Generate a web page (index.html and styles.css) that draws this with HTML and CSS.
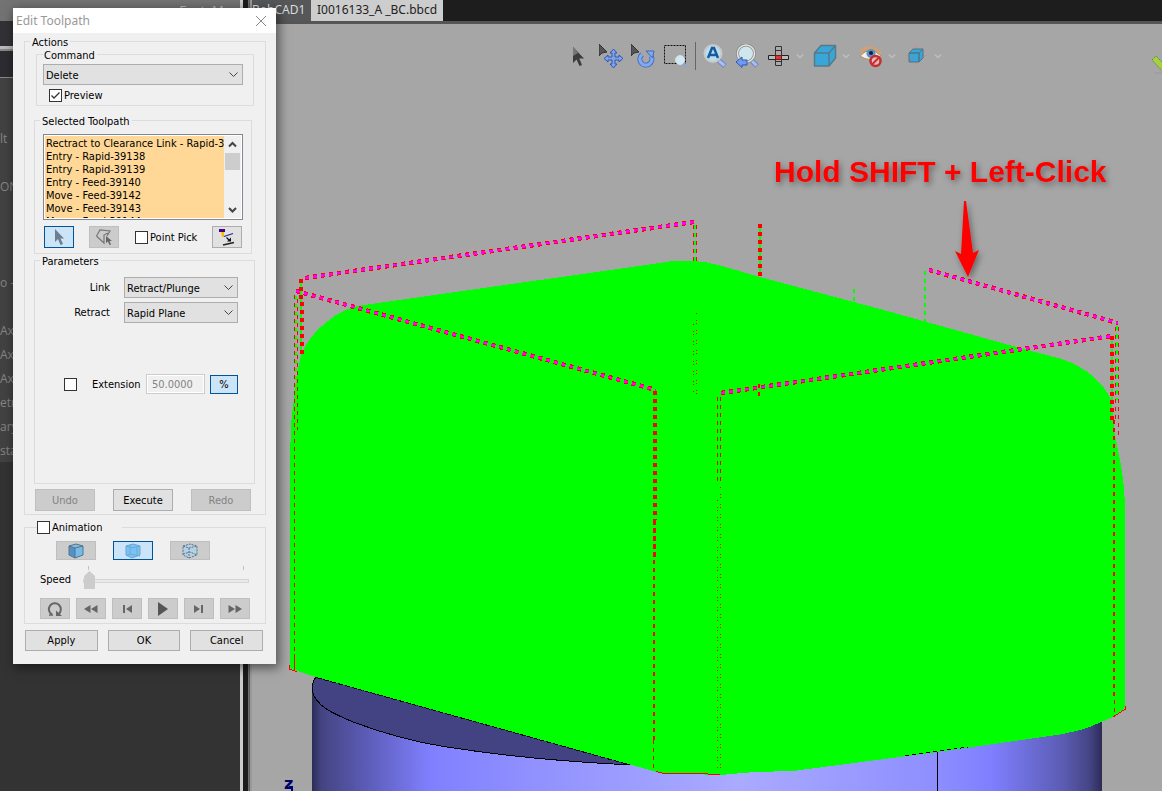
FILE: index.html
```html
<!DOCTYPE html>
<html lang="en">
<head>
<meta charset="utf-8">
<title>BobCAD - Edit Toolpath</title>
<link rel="stylesheet" href="styles.css">
</head>
<body>
<div class="app">
  <aside class="side">
    <div class="side-tab">Feat. Mgr</div>
    <div class="side-strip"></div>
    <div class="side-edit"></div>
    <div class="side-tree">
      <span class="row r-lt">lt</span>
      <span class="row r-on">ON</span>
      <span class="row r-o">o -</span>
      <span class="row">Ax</span>
      <span class="row">Ax</span>
      <span class="row">Ax</span>
      <span class="row">etr</span>
      <span class="row">ary</span>
      <span class="row">sta</span>
    </div>
    <div class="side-empty"></div>
  </aside>
  <div class="splitter"></div>
  <main class="work">
    <nav class="tabs">
      <a class="tab" href="#">BobCAD1</a>
      <a class="tab tab-on" href="#">I0016133_A _BC.bbcd</a>
    </nav>
    <div class="view">
      <svg class="scene" viewBox="252 24 910 767" preserveAspectRatio="xMidYMid slice" shape-rendering="crispEdges">
        <defs>
          <linearGradient id="cyl" gradientUnits="userSpaceOnUse" x1="312" y1="0" x2="1102" y2="0">
            <stop offset="0" stop-color="#2c2c58"/><stop offset=".012" stop-color="#444483"/>
            <stop offset=".07" stop-color="#5c5cb8"/><stop offset=".15" stop-color="#8080ff"/>
            <stop offset=".3" stop-color="#9393ff"/><stop offset=".54" stop-color="#aaaaff"/>
            <stop offset=".79" stop-color="#8e8eff"/><stop offset=".86" stop-color="#7f7fff"/>
            <stop offset=".95" stop-color="#5c5cb4"/><stop offset=".985" stop-color="#444484"/>
            <stop offset="1" stop-color="#2c2c58"/>
          </linearGradient>
          <filter id="sh" x="-20%" y="-20%" width="150%" height="150%">
            <feDropShadow dx="2" dy="3" stdDeviation="3" flood-color="#000" flood-opacity=".4"/>
          </filter>
        </defs>
        <path fill="url(#cyl)" d="M312 690V800H1102V715L700 740L400 700Z"/>
        <path fill="#434383" stroke="#000" d="M316 677Q312 682 312 690C315 706 334 714 353 722C388 735 420 743 447 747C510 757 570 762 632 765Z"/>
        <path stroke="#000" d="M937.500 750V800"/>
        <path fill="#0f0" d="M290 668V460L291 425L293 407L297 375L301 355Q306 343 314 334Q335 311 358 306L413 298L660 263Q678 259 705 262L722 266L760 277L880 309L1020 348L1062 359Q1100 373 1112 402L1114 430L1120 460Q1125 485 1125 515V708L1113 717L1092 726L1080 730L1063 734L938 752L793 771L755 772L720 775L660 773L632 765L316 677L297 671Z"/>
        <path fill="none" stroke="#000" stroke-dasharray="4 3" d="M318 678L630 765M905 756L968 747"/>
        <g fill="none" stroke="#0f0" stroke-width="2">
          <path stroke-dasharray="4 4" d="M695 225V262M854 289V303M925 271V322M296 296V450M1117 326V400"/>
          <path d="M301 280V352M760 224V276"/>
          <path stroke-dasharray="4 4" d="M1112 341V400"/>
        </g>
        <g fill="none" stroke="red">
          <path stroke-dasharray="4 4" d="M693.500 225V262M696.500 225V262M294.500 295V660M297.500 299V430M717.500 397V481M720.500 397V481M1115.500 327V420M1118.500 327V435"/>
          <path stroke-dasharray="1 6 1 2" d="M696.500 313V394M693.500 324V394M720.500 487V770M717.500 500V770"/>
          <path stroke-width="4" stroke-dasharray="4 4" d="M301 279V299M302 302V354M760 224V276M655 391V520M1112 336V420"/>
          <path stroke-width="3" stroke-dasharray="5 3" d="M654.500 520V560"/>
          <path stroke-width="2" stroke-dasharray="4 4" d="M654 560V740M1114 420V700M759 384V396"/>
          <path stroke-dasharray="4 4" d="M653.500 740V768M1114.500 700V712"/>
          <path d="M294.500 654V671M289 665V669L297 671.500M656 771.500L664 773.500H696L720 774.500M1125.500 706V709L1113 717"/>
        </g>
        <g fill="none">
          <g stroke="red" stroke-width="4.500" stroke-dasharray="4.100 4">
            <path d="M305 278L694 222"/><path d="M296 291L656 390"/><path d="M929 270L1118 323"/><path d="M721 393L1112 336"/>
          </g>
          <g stroke="#f0f" stroke-width="2.400" stroke-dasharray="4.100 4">
            <path d="M305 278L694 222"/><path d="M296 291L656 390"/><path d="M929 270L1118 323"/><path d="M721 393L1112 336"/>
          </g>
        </g>
        <g filter="url(#sh)" shape-rendering="auto">
          <text class="note" x="774" y="182">Hold SHIFT + Left-Click</text>
          <path fill="red" d="M964 201H966L973 253L979 250L968 277L955 251L961 254Z"/>
        </g>
        <text class="axis" x="284" y="789">z</text>
        <path fill="none" stroke="#007" stroke-width="2" d="M289 787H292V792"/>
        <g shape-rendering="auto" stroke-width="1">
          <path fill="#a6cf45" stroke="#5a8a2a" stroke-dasharray="1.500 1" d="M1152 60L1156 56L1168 68V77Z"/>
          <path stroke="#999" d="M1155 73H1162"/>
        </g>
      </svg>
      <div class="toolbar">
        <button class="tool" aria-label="Select"><svg viewBox="0 0 24 24"><path d="M6 3V19L9.500 15.500L12.500 22L15 21L12.300 14.500H17Z" fill="#3c3c3c"/><path d="M6 3V12L11 9Z" fill="#777"/></svg></button>
        <button class="tool" aria-label="Pan"><svg viewBox="0 0 24 24"><path d="M0 0V12L3 9L8 8Z" fill="#555" stroke="#333"/><path d="M14.500 5L18 9H16V13H20V11L24 14.500L20 18V16H16V20H18L14.500 24L11 20H13V16H9V18L5 14.500L9 11V13H13V9H11Z" fill="#7aa2ee" stroke="#3558ae" stroke-width="1"/></svg></button>
        <button class="tool" aria-label="Rotate"><svg viewBox="0 0 24 24"><path d="M0 0V12L3 9L8 8Z" fill="#555" stroke="#333"/><path d="M11 10.500A6 6 0 1 0 20 12" fill="none" stroke="#4268b8" stroke-width="5"/><path d="M11 10.500A6 6 0 1 0 20 12" fill="none" stroke="#81a9f0" stroke-width="3.400"/><path d="M15 7H23L21.500 14Z" fill="#81a9f0" stroke="#4268b8"/></svg></button>
        <button class="tool" aria-label="Zoom window"><svg viewBox="0 0 24 24"><path d="M1.500 1.500H22.500V19.500H1.500Z" fill="none" stroke="#111" stroke-dasharray="2 1"/><path d="M19 18L23 22" stroke="#86a6dc" stroke-width="3"/><circle cx="17" cy="16" r="4.500" fill="#cfeaf5" stroke="#ddd"/></svg></button>
        <span class="sep"></span>
        <button class="tool" aria-label="Zoom all"><svg viewBox="0 0 24 24"><path d="M15 16L22 22" stroke="#7086bd" stroke-width="5"/><path d="M16 17L21.500 21.500" stroke="#a8bdf0" stroke-width="3"/><circle cx="10" cy="9.500" r="8.500" fill="#b9def0" stroke="#c8c8c8" stroke-width="2"/><path d="M5 14L9 4H11L15 14M7 11H13" fill="none" stroke="#175a9e" stroke-width="2.500"/></svg></button>
        <button class="tool" aria-label="Zoom previous"><svg viewBox="0 0 24 24"><path d="M16 16L22 22" stroke="#7086bd" stroke-width="5"/><path d="M17 17L21.500 21.500" stroke="#a8bdf0" stroke-width="3"/><circle cx="11" cy="9.500" r="8.500" fill="#cfe6ee" stroke="#888" stroke-width="3"/><circle cx="11" cy="9.500" r="8.500" fill="none" stroke="#e6e6e6" stroke-width="1.500"/><path d="M1 18L7 13V16H12V21H7V23.500Z" fill="#6f9cf0" stroke="#2f55b0"/></svg></button>
        <span class="split"><button class="tool" aria-label="Work plane"><svg viewBox="0 0 24 24"><path d="M8.500 2.500H14.500V21.500H8.500ZM8.500 6.500H14.500M8.500 17.500H14.500" fill="#aaa" stroke="#333"/><path d="M1.500 11.500H21.500V15.500H1.500Z" fill="#bbb" stroke="#222"/><path d="M8.500 11.500H14.500V15.500H8.500Z" fill="#e83030" stroke="#622"/></svg></button><button class="drop" aria-label="Work plane options"><svg viewBox="0 0 11 11"><path d="M2 4L5.500 7L9 4" /></svg></button></span>
        <span class="split"><button class="tool" aria-label="Views"><svg viewBox="0 0 24 24"><path d="M1.500 9L8 1.500H22.500L16 9ZM16 9L22.500 1.500V14L16 22Z M1.500 9H16V22H1.500Z" fill="#39a6d9" stroke="#557b88" stroke-width="1.500" stroke-linejoin="round"/></svg></button><button class="drop" aria-label="View options"><svg viewBox="0 0 11 11"><path d="M2 4L5.500 7L9 4"/></svg></button></span>
        <span class="split"><button class="tool" aria-label="Visibility"><svg viewBox="0 0 24 24"><path d="M1 12Q11 1 22 12Q11 19 1 12Z" fill="#f4efe8" stroke="#b98a5e"/><path d="M1 8Q11-1 22 9" fill="none" stroke="#d9a066" stroke-width="2.500"/><circle cx="12" cy="9.500" r="4.500" fill="#5b8fc7"/><circle cx="12" cy="9" r="2" fill="#123"/><circle cx="16.500" cy="17" r="5" fill="#e8b8b8" stroke="#c43030" stroke-width="2.500"/><path d="M13 20.500L20 13.500" stroke="#c43030" stroke-width="2"/></svg></button><button class="drop" aria-label="Visibility options"><svg viewBox="0 0 11 11"><path d="M2 4L5.500 7L9 4"/></svg></button></span>
        <span class="split"><button class="tool" aria-label="Section"><svg viewBox="0 0 24 24"><path d="M11.500 1V22M0 11.500H22" stroke="#d88"/><path d="M4 9L8 5H18L14 9ZM14 9L18 5V14L14 18ZM4 9H14V18H4Z" fill="#39a6d9" stroke="#4d7584" stroke-linejoin="round"/><path d="M5 17L9 13" stroke="#a77"/></svg></button><button class="drop" aria-label="Section options"><svg viewBox="0 0 11 11"><path d="M2 4L5.500 7L9 4"/></svg></button></span>
      </div>
    </div>
  </main>
</div>

<form class="dialog" aria-label="Edit Toolpath">
  <header class="title">
    <span>Edit Toolpath</span>
    <button type="button" class="close" aria-label="Close"><svg viewBox="0 0 12 12"><path d="M1 1L11 11M11 1L1 11"/></svg></button>
  </header>
  <div class="body">
    <fieldset class="group actions">
      <legend>Actions</legend>
      <fieldset class="group command">
        <legend>Command</legend>
        <select class="combo" aria-label="Command"><option>Delete</option></select>
        <label class="check"><input type="checkbox" checked>Preview</label>
      </fieldset>
      <fieldset class="group selected">
        <legend>Selected Toolpath</legend>
        <div class="list">
          <select multiple size="6" aria-label="Selected Toolpath">
            <option selected>Rectract to Clearance Link - Rapid-39137</option>
            <option selected>Entry - Rapid-39138</option>
            <option selected>Entry - Rapid-39139</option>
            <option selected>Entry - Feed-39140</option>
            <option selected>Move - Feed-39142</option>
            <option selected>Move - Feed-39143</option>
            <option selected>Move - Feed-39144</option>
          </select>
          <div class="scroll">
            <button type="button" aria-label="Scroll up"><svg viewBox="0 0 11 11"><path d="M2 7.500L5.500 4L9 7.500"/></svg></button>
            <span class="thumb"></span>
            <button type="button" aria-label="Scroll down"><svg viewBox="0 0 11 11"><path d="M2 4L5.500 7.500L9 4"/></svg></button>
          </div>
        </div>
        <div class="pick">
          <button type="button" class="btn on" aria-label="Pick"><svg width="14" height="18" viewBox="0 0 14 18"><path d="M3 1V14L6 11L8.500 17L11 16L8.500 10.500H12Z" fill="#6d7f8e"/></svg></button>
          <button type="button" class="btn off" disabled aria-label="Polygon pick"><svg width="18" height="18" viewBox="0 0 18 18"><path d="M1.500 8L5 2L15 3L12 8M1.500 8L9 15V7L13 5" fill="none" stroke="#777" stroke-width="1.200"/><path d="M11 8V15L13 13.500L14.500 17L16 16.500L14.500 13H17Z" fill="#666"/></svg></button>
          <label class="check"><input type="checkbox">Point Pick</label>
          <button type="button" class="btn" aria-label="Edit links"><svg width="18" height="18" viewBox="0 0 18 18"><path d="M1 1H7V4H1Z" fill="#408"/><path d="M3 4H6V9H4Z" fill="#fb0"/><path d="M6 8.500L15 5.500" stroke="#22a" stroke-width="1.300"/><path d="M5 17L16 14.500" stroke="#222" stroke-width="1.300"/><path d="M8.500 9.500L11 12" stroke="#111" stroke-width="1.200"/><path d="M13 9.500V13.500H9Z" fill="#111"/></svg></button>
        </div>
      </fieldset>
      <fieldset class="group params">
        <legend>Parameters</legend>
        <div class="pair"><label for="link">Link</label><select id="link" class="combo"><option>Retract/Plunge</option></select></div>
        <div class="pair"><label for="retract">Retract</label><select id="retract" class="combo"><option>Rapid Plane</option></select></div>
        <div class="ext"><input type="checkbox" id="useext"><label for="useext">Extension</label><input type="text" class="num" value="50.0000" disabled aria-label="Extension value"><button type="button" class="btn on">%</button></div>
      </fieldset>
      <div class="cmds">
        <button type="button" class="btn off" disabled>Undo</button>
        <button type="button" class="btn">Execute</button>
        <button type="button" class="btn off" disabled>Redo</button>
      </div>
    </fieldset>
    <fieldset class="group anim">
      <legend><label class="check"><input type="checkbox">Animation</label></legend>
      <div class="modes">
        <button type="button" class="btn off" disabled aria-label="Shaded"><svg width="16" height="16" viewBox="0 0 16 16"><path d="M1 3L7 5V15L1 12Z" fill="#5590c8"/><path d="M7 5L15 3V12L7 15Z" fill="#75bbe8"/><path d="M1 3L8 1L15 3L7 5Z" fill="#8bbada"/><path d="M1 3L8 1L15 3V12L7 15L1 12ZM1 3L7 5L15 3M7 5V15" fill="none" stroke="#557488"/></svg></button>
        <button type="button" class="btn on" aria-label="Translucent"><svg width="16" height="16" viewBox="0 0 16 16"><path d="M1 3L8 1L15 3V12L7 15L1 12Z" fill="#7cc1f2" stroke="#6ba7d2"/><path d="M1 3L7 5L15 3M5 2V11L1 13M5 11L15 13M12 3V13" fill="none" stroke="#65acde"/></svg></button>
        <button type="button" class="btn off" disabled aria-label="Wireframe"><svg width="16" height="16" viewBox="0 0 16 16"><path d="M1 3L8 1L15 3V12L7 15L1 12Z" fill="#b4d0e4"/><path d="M1 3L8 1L15 3V12L7 15L1 12ZM1 3L7 5L15 3M7 5V15M1 11L8 9L15 12" fill="none" stroke="#5b7282" stroke-dasharray="2 1"/></svg></button>
      </div>
      <div class="speed">
        <label for="speed">Speed</label>
        <div class="slide">
          <div class="ticks"><i></i><i></i></div>
          <input id="speed" type="range" min="0" max="100" value="0" disabled>
        </div>
      </div>
      <div class="play">
        <button type="button" class="btn off" disabled aria-label="Loop"><svg width="18" height="18" viewBox="0 0 18 18"><path d="M6 14.500A6 6 0 1 1 12.500 14" fill="none" stroke="#666" stroke-width="2"/><path d="M10 10.500V16H16Z" fill="#666"/><path d="M3 15H7" stroke="#666" stroke-width="1.500"/></svg></button>
        <button type="button" class="btn off" disabled aria-label="Rewind"><svg width="16" height="10" viewBox="0 0 16 10"><path d="M7.500 1V9L1 5ZM14.500 1V9L8 5Z" fill="#666"/></svg></button>
        <button type="button" class="btn off" disabled aria-label="Previous"><svg width="16" height="10" viewBox="0 0 16 10"><path d="M4 1H6V9H4ZM13 1V9L7 5Z" fill="#666"/></svg></button>
        <button type="button" class="btn off" disabled aria-label="Play"><svg width="12" height="16" viewBox="0 0 12 16"><path d="M1 1L11 8L1 15Z" fill="#555"/></svg></button>
        <button type="button" class="btn off" disabled aria-label="Next"><svg width="16" height="10" viewBox="0 0 16 10"><path d="M10 1H12V9H10ZM3 1V9L9 5Z" fill="#666"/></svg></button>
        <button type="button" class="btn off" disabled aria-label="Fast forward"><svg width="16" height="10" viewBox="0 0 16 10"><path d="M1.500 1V9L8 5ZM8.500 1V9L15 5Z" fill="#666"/></svg></button>
      </div>
    </fieldset>
    <footer class="foot">
      <button type="button" class="btn">Apply</button>
      <button type="button" class="btn">OK</button>
      <button type="button" class="btn">Cancel</button>
    </footer>
  </div>
</form>
</body>
</html>
```
FILE: styles.css
```css
* { box-sizing: border-box; }
html, body { height: 100%; }
body { margin: 0; overflow: hidden; background: #a6a6a6; font: 11px "DejaVu Sans Condensed", "Noto Sans", sans-serif; color: #000; }
button, select, input, legend { font: inherit; color: inherit; margin: 0; padding: 0; }
button { border: 0; background: none; }
svg { display: block; }

.app { display: grid; grid-template-columns: 243px 9px 1fr; height: 100%; }

/* side panel */
.side { display: flex; flex-direction: column; border-right: 3px solid #ccc; background: #333; overflow: hidden; color: #858585; font: 13px "Open Sans", sans-serif; }
.side-tab { height: 21px; background: #737373; color: #bbb; padding: 1px 4px 0; text-align: right; }
.side-strip { height: 28px; background: #323236; border-bottom: 3px solid #bbb; }
.side-edit { height: 29px; background: #2c2c31; border-top: 2px solid #888; border-bottom: 1px solid #888; }
.side-tree { height: 384px; background: #424242; display: flex; flex-direction: column; align-items: flex-start; padding-top: 49px; }
.row { height: 24px; line-height: 24px; white-space: nowrap; font-size: 12px; }
.r-lt { margin-bottom: 24px; }
.r-on { margin-bottom: 72px; }
.r-o { margin-bottom: 24px; }
.side-empty { flex: 1; }

.splitter { background: linear-gradient(90deg, #1c1c1c 5px, #777 5px, #555 7px, #999 7px); }

/* work area */
.work { display: flex; flex-direction: column; min-width: 0; }
.tabs { display: flex; height: 21px; background: #1d1d1d; font: 12px "Noto Sans", sans-serif; }
.tab { width: 59px; background: #555759; color: #ddd; text-decoration: none; line-height: 20px; text-align: right; padding-right: 6px; }
.tab-on { width: auto; background: #cdcdcd; color: #222; padding: 0 6px; }
.view { flex: 1; position: relative; min-height: 0; border-top: 3px solid #555; }
.scene { width: 100%; height: 100%; }
.note { font: bold 30px "Liberation Sans", sans-serif; fill: red; }
.axis { font: bold 16px "DejaVu Sans", sans-serif; fill: #006; }
.toolbar { position: absolute; top: 18px; left: 315px; display: flex; align-items: center; gap: 8px; }
.tool { width: 24px; height: 24px; }
.split { display: flex; align-items: center; gap: 4px; }
.drop { width: 10px; height: 11px; }
.drop path { fill: none; stroke: #bcbcbc; stroke-width: 2; }
.sep { width: 1px; height: 28px; margin-right: -1px; background: #666; }

/* dialog window */
.dialog { position: absolute; left: 13px; top: 8px; width: 263px; background: #f0f0f0; box-shadow: 2px 3px 10px 1px rgba(0, 0, 0, .5); }
.title { display: flex; justify-content: space-between; align-items: center; height: 25px; padding: 0 9px 0 3px; background: #fff; color: #999; font: 12px "Noto Sans", sans-serif; }
.close svg { width: 12px; height: 12px; stroke: #888; fill: none; }
.body { padding: 2px 10px 13px 11px; }
.group { border: 1px solid #dcdcdc; padding: 0; margin: 0; min-width: 0; }
legend { height: 13px; line-height: 15px; padding: 0 2px; margin-left: 5px; }
.command { margin: 0 11px 0; padding: 3px 10px 3px 6px; }
.command legend { margin-left: 0; padding-left: 1px; }
.selected { margin: 8px 13px 0 9px; padding: 7px 8px 5px; }
.selected legend, .params legend { margin-left: -3px; }
.params { margin: 0 10px 0 9px; padding: 10px 16px 0; min-height: 230px; }
.params legend { margin-left: -11px; }

.combo { appearance: none; display: block; width: 100%; height: 21px; padding: 1px 2px 0; border: 1px solid #adadad; border-radius: 0; color: #000;
  background: #e1e1e1 url("data:image/svg+xml,%3Csvg xmlns='http://www.w3.org/2000/svg' width='9' height='6'%3E%3Cpath d='M.5 .5L4.500 4.500L8.500 .5' fill='none' stroke='%23444'/%3E%3C/svg%3E") no-repeat right 4px center; }
.check { display: flex; align-items: center; gap: 2px; height: 13px; line-height: 15px; }
.command .check { margin: 4px 6px 0; }
input[type="checkbox"] { appearance: none; width: 13px; height: 13px; border: 1px solid #333; background: #fff; flex: none; }
input[type="checkbox"]:checked { background: #fff url("data:image/svg+xml,%3Csvg xmlns='http://www.w3.org/2000/svg' width='11' height='11'%3E%3Cpath d='M1.500 5.500L4 8L9.500 2.500' fill='none' stroke='%23333' stroke-width='1.300'/%3E%3C/svg%3E") center; }

.list { display: flex; height: 86px; border: 1px solid #828790; background: #fff; padding: 1px; }
.list select { appearance: none; flex: 1; min-width: 0; height: 82px; padding-top: 1px; border: 0; border-radius: 0; outline: 0; overflow: hidden; background: #ffd897; scrollbar-width: none; }
.list option { height: 13px; min-height: 0; line-height: 13px; padding: 0 1px; color: #000; white-space: nowrap; }
.list option:checked { background: #ffd897 linear-gradient(#ffd897, #ffd897); color: #000; }
.scroll { width: 17px; display: flex; flex-direction: column; align-items: center; background: #f0f0f0; }
.scroll button { width: 17px; height: 17px; display: grid; place-items: center; }
.scroll svg { width: 11px; height: 11px; fill: none; stroke: #444; stroke-width: 2; }
.thumb { width: 15px; height: 17px; background: #cdcdcd; margin-bottom: auto; }

.btn { display: flex; align-items: center; justify-content: center; height: 21px; border: 1px solid #adadad; background: #e1e1e1; }
.btn.on { border-color: #005499; background: #cce4f7; }
.btn.off { border-color: #bfbfbf; background: #ccc; color: #838383; }
.pick { display: flex; align-items: center; margin: 6px 1px 0; }
.pick .btn { width: 30px; height: 22px; }
.pick .off { margin-left: 15px; }
.pick .check { margin: 0 auto 0 16px; }

.pair { display: grid; grid-template-columns: 60px 114px; justify-content: end; align-items: center; margin-bottom: 4px; }
.pair label { padding-right: 14px; text-align: right; margin-left: -10px; }
.ext { display: flex; align-items: center; height: 20px; margin: 51px 0 0 13px; }
.ext label { margin-left: 15px; width: 54px; white-space: nowrap; }
.num { width: 59px; height: 20px; border: 1px solid #ccc; background: #f0f0f0; box-shadow: inset 0 0 0 1px #fff; padding: 0 5px; color: #838383; }
.ext .btn { width: 28px; height: 19px; margin-left: 5px; }

.cmds { display: flex; gap: 18px; padding: 5px 14px 3px 10px; }
.cmds .btn { flex: 1; height: 22px; }

.anim { margin-top: 6px; padding: 7px 16px 4px 15px; }
.anim legend { margin-left: -3px; padding: 0 20px 0 0; }
.modes { display: flex; gap: 17px; padding-left: 16px; }
.modes .btn { width: 40px; height: 19px; }
.speed { display: flex; align-items: center; height: 38px; }
.speed label { width: 43px; }
.slide { flex: 1; }
.ticks { display: flex; justify-content: space-between; padding: 0 5px; }
.ticks i { width: 1px; height: 4px; background: #c4c4c4; }
input[type="range"] { appearance: none; display: block; width: 100%; height: 22px; background: linear-gradient(#d6d6d6, #d6d6d6) center / 100% 4px no-repeat; }
input[type="range"]::-webkit-slider-runnable-track { height: 4px; border: 1px solid #d6d6d6; background: #e7eaea; }
input[type="range"]::-webkit-slider-thumb { appearance: none; width: 11px; height: 18px; margin-top: -9px; background: #ccc; clip-path: polygon(50% 0, 100% 28%, 100% 100%, 0 100%, 0 28%); }
.play { display: flex; gap: 6px; }
.play .btn { width: 30px; height: 21px; flex: none; }

.foot { display: flex; gap: 10px; padding: 6px 3px 0 1px; }
.foot .btn { flex: 1; }
```
